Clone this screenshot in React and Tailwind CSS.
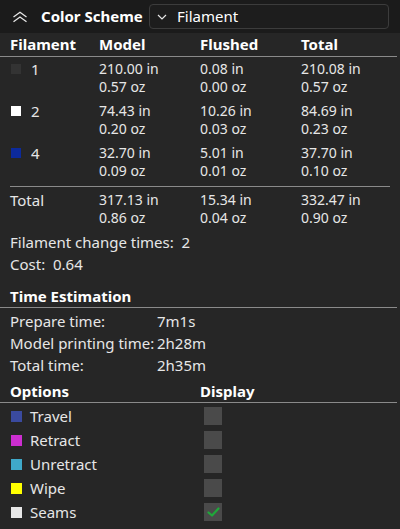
import React from 'react';

const filaments = [
  { id: '1', color: 'bg-[#333333]', model: ['210.00 in', '0.57 oz'], flushed: ['0.08 in', '0.00 oz'], total: ['210.08 in', '0.57 oz'] },
  { id: '2', color: 'bg-[#ffffff]', model: ['74.43 in', '0.20 oz'], flushed: ['10.26 in', '0.03 oz'], total: ['84.69 in', '0.23 oz'] },
  { id: '4', color: 'bg-[#0c2a9c]', model: ['32.70 in', '0.09 oz'], flushed: ['5.01 in', '0.01 oz'], total: ['37.70 in', '0.10 oz'] },
];

const options = [
  { name: 'Travel', color: 'bg-[#3a4a9e]', on: false },
  { name: 'Retract', color: 'bg-[#cc2ed0]', on: false },
  { name: 'Unretract', color: 'bg-[#3fa9c9]', on: false },
  { name: 'Wipe', color: 'bg-[#ffff00]', on: false },
  { name: 'Seams', color: 'bg-[#e6e6e6]', on: true },
];

function Cell({ lines, className = '' }) {
  return (
    <div className={`text-[14px] ${className}`}>
      {lines.map((l) => (
        <div key={l} className="h-[18px] leading-[18px]">{l}</div>
      ))}
    </div>
  );
}

export default function App() {
  return (
    <div
      className="w-[400px] h-[529px] overflow-hidden bg-[#262626] text-[15px] text-[#e6e6e6]"
      style={{ fontFamily: '"Noto Sans", "Open Sans", sans-serif' }}
    >
      {/* header */}
      <div className="h-[33px] bg-[#1b1b1b] flex items-center">
        <svg className="ml-[12px] w-[16px] h-[12px]" viewBox="0 0 16 12" fill="none" stroke="#e6e6e6" strokeWidth="1.3">
          <path d="M1.5 6 L8 1.2 L14.5 6" />
          <path d="M1.5 10.8 L8 6 L14.5 10.8" />
        </svg>
        <span className="ml-[13px] font-bold text-white">Color Scheme</span>
        <div className="ml-auto mr-[11px] w-[240px] h-[25px] rounded-[4px] border border-[#3c3c3c] bg-[#1d1d1d] flex items-center">
          <svg className="ml-[7px] w-[10px] h-[6px]" viewBox="0 0 10 6" fill="none" stroke="#e6e6e6" strokeWidth="1.2">
            <path d="M1 1 L5 5 L9 1" />
          </svg>
          <span className="ml-[10px] text-white">Filament</span>
        </div>
      </div>

      {/* table header */}
      <div className="h-[24px] flex items-center font-bold text-white border-b border-[#8a8a8a] mr-[3px]">
        <div className="w-[99px] pl-[10px]">Filament</div>
        <div className="w-[101px]">Model</div>
        <div className="w-[101px]">Flushed</div>
        <div>Total</div>
      </div>

      <div className="pt-[3px]">
        {filaments.map((f) => (
          <div key={f.id} className="h-[42px] flex">
            <div className="w-[99px] pl-[11px] flex h-[18px] items-center">
              <span className={`w-[10px] h-[10px] ${f.color}`} />
              <span className="ml-[10px] leading-[18px]">{f.id}</span>
            </div>
            <Cell lines={f.model} className="w-[101px]" />
            <Cell lines={f.flushed} className="w-[101px]" />
            <Cell lines={f.total} />
          </div>
        ))}
      </div>

      <div className="mx-[10px] border-t border-[#8a8a8a]" />

      <div className="pt-[4px] flex">
        <div className="w-[99px] pl-[10px] h-[18px] leading-[18px]">Total</div>
        <Cell lines={['317.13 in', '0.86 oz']} className="w-[101px]" />
        <Cell lines={['15.34 in', '0.04 oz']} className="w-[101px]" />
        <Cell lines={['332.47 in', '0.90 oz']} />
      </div>

      <div className="mt-[4px] pl-[10px]">
        <div className="h-[22px] leading-[22px]">Filament change times:&nbsp; 2</div>
        <div className="h-[22px] leading-[22px]">Cost:&nbsp; 0.64</div>
      </div>

      {/* time estimation */}
      <div className="mt-[10px] h-[22px] leading-[22px] pl-[10px] font-bold text-white border-b border-[#8a8a8a] box-content mr-[3px]">
        Time Estimation
      </div>
      <div className="pt-[2px] pl-[10px]">
        {[
          ['Prepare time:', '7m1s'],
          ['Model printing time:', '2h28m'],
          ['Total time:', '2h35m'],
        ].map(([k, v]) => (
          <div key={k} className="h-[22px] leading-[22px] flex">
            <span className="w-[147px]">{k}</span>
            <span>{v}</span>
          </div>
        ))}
      </div>

      {/* options */}
      <div className="mt-[4px] h-[22px] leading-[22px] flex font-bold text-white border-b border-[#8a8a8a] box-content mr-[3px]">
        <span className="w-[200px] pl-[10px]">Options</span>
        <span>Display</span>
      </div>
      <div className="pt-[1px]">
        {options.map((o) => (
          <div key={o.name} className="h-[24px] flex items-center">
            <span className={`ml-[11px] w-[11px] h-[11px] ${o.color}`} />
            <span className="ml-[8px] w-[174px]">{o.name}</span>
            <span className="w-[18px] h-[18px] bg-[#4a4a4a] flex items-center justify-center">
              {o.on && (
                <svg className="w-[13px] h-[10px]" viewBox="0 0 13 10" fill="none" stroke="#1fa83a" strokeWidth="2.2" strokeLinecap="round" strokeLinejoin="round">
                  <path d="M1.5 5.5 L5 8.5 L11.5 1.5" />
                </svg>
              )}
            </span>
          </div>
        ))}
      </div>
    </div>
  );
}
